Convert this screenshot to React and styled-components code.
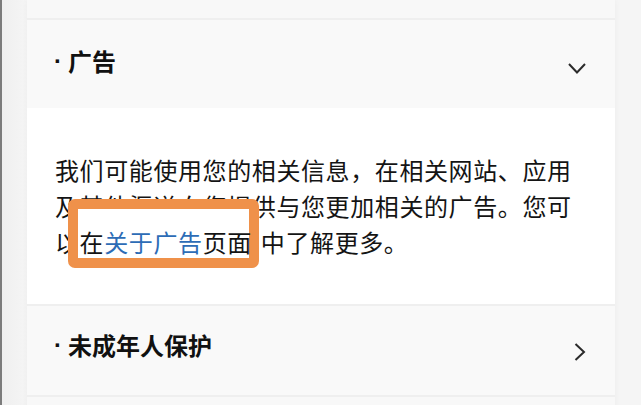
import React from 'react';
import styled, { createGlobalStyle } from 'styled-components';

const GlobalStyle = createGlobalStyle`
  html, body {
    margin: 0;
    padding: 0;
    background: #f4f4f4;
  }
  body {
    font-family: "Noto Sans CJK SC", "Noto Sans", sans-serif;
    color: #161616;
  }
`;

const Page = styled.div`
  width: 641px;
  height: 405px;
  overflow: hidden;
  box-sizing: border-box;
  border-left: 2px solid #7c7c7c;
  background: linear-gradient(90deg, #efefef 0px, #f5f5f5 25px, #f5f5f5 100%);
  padding: 0 26px 0 25px;
`;

const Card = styled.div`
  background: #fff;
  box-shadow: 0 0 6px rgba(0, 0, 0, 0.04);
  display: flex;
  flex-direction: column;
`;

const Tail = styled.div`
  height: 18px;
  background: #f8f8f8;
  border-bottom: 2px solid #efefef;
`;

const Header = styled.div`
  height: ${({ tall }) => tall}px;
  background: #f9f9f9;
  border-bottom: ${({ divided }) => (divided ? '2px solid #efefef' : 'none')};
  display: flex;
  align-items: center;
  justify-content: space-between;
  padding: 0 29px 0 28px;
  box-sizing: content-box;
`;

const Title = styled.h3`
  margin: 0 0 ${({ lift }) => lift}px;
  font-size: 24px;
  font-weight: 700;
  line-height: 1;
  color: #111;
  display: flex;
  align-items: center;
`;

/* a narrow latin middle dot, the CJK one is full width */
const Dot = styled.span`
  font-family: "Liberation Sans", sans-serif;
  font-weight: 700;
  margin: 0 6px 0 -1px;
`;

const Arrow = styled.svg`
  display: block;
  margin-top: ${({ drop }) => drop}px;
  fill: none;
  stroke: #2b2b2b;
  stroke-width: 2;
`;

const Body = styled.div`
  padding: 44px 28px 44px 28px;
  border-bottom: 2px solid #efefef;
`;

const Text = styled.p`
  margin: 0;
  font-size: 24px;
  line-height: 36px;
  letter-spacing: 0.6px;
  color: #141414;
`;

const Highlight = styled.span`
  display: inline-block;
  position: relative;
  z-index: 0;
  margin-right: 9px;

  &::before {
    content: '';
    position: absolute;
    top: -25px;
    left: -12px;
    right: -7px;
    bottom: -8px;
    border: 10px solid #ef914a;
    border-radius: 7px;
    background: #fff;
    z-index: -1;
  }
`;

const Link = styled.span`
  color: #2d6cb6;
`;

export default function App() {
  return (
    <>
      <GlobalStyle />
      <Page>
        <Card>
          <Tail />
          <Header tall={88}>
            <Title lift={6}>
              <Dot>·</Dot>广告
            </Title>
            <Arrow width="18" height="11" viewBox="0 0 18 11" drop={8}>
              <polyline points="1,1 9,9.5 17,1" />
            </Arrow>
          </Header>
          <Body>
            <Text>
              我们可能使用您的相关信息，在相关网站、应用及其他渠道向您提供与您更加相关的广告。您可以
              <Highlight>
                在<Link>关于广告</Link>页面
              </Highlight>
              中了解更多。
            </Text>
          </Body>
          <Header tall={89} divided>
            <Title lift={12}>
              <Dot>·</Dot>未成年人保护
            </Title>
            <Arrow width="12" height="18" viewBox="0 0 12 18" drop={2}>
              <polyline points="1.5,1 10,9 1.5,17" />
            </Arrow>
          </Header>
          <Tail />
        </Card>
      </Page>
    </>
  );
}
